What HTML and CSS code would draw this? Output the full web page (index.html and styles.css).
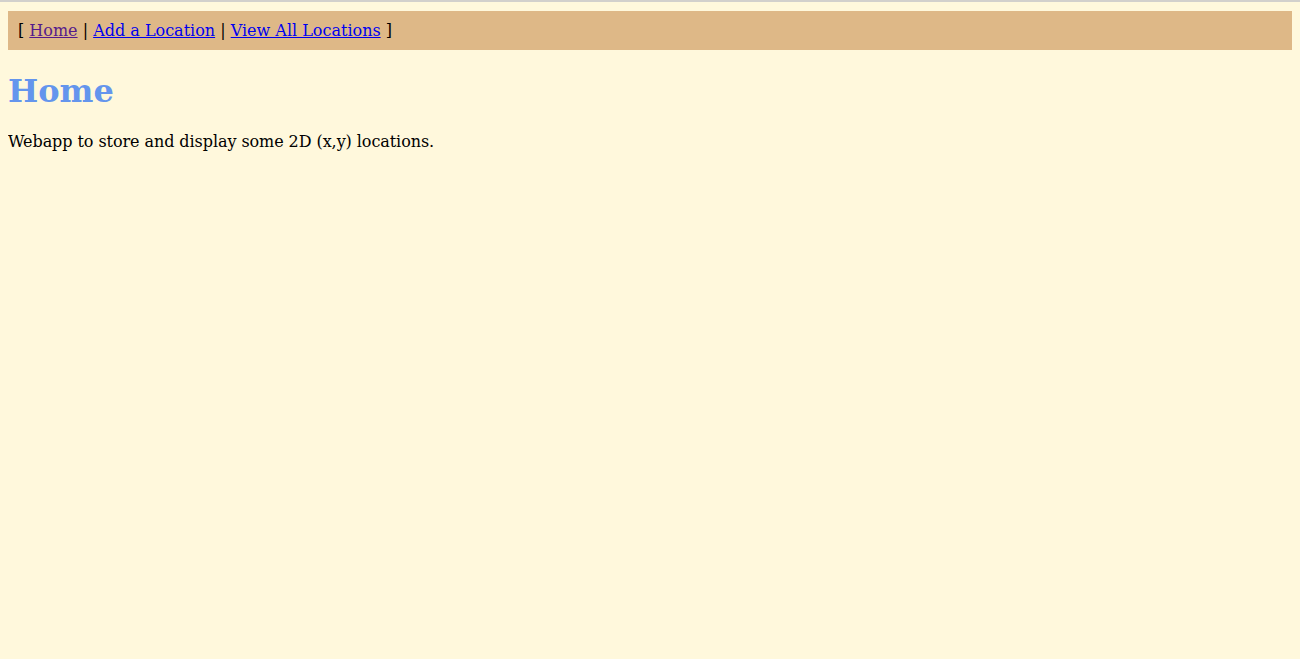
FILE: index.html
```html
<!DOCTYPE html>
<html>
<head>
<meta charset="utf-8">
<title>Home</title>
<link rel="stylesheet" href="styles.css">
</head>
<body>
<div class="nav">[ <a class="visited" href="#">Home</a> | <a href="#">Add a Location</a> | <a href="#">View All Locations</a> ]</div>
<h1 class="title">Home</h1>
<p class="intro">Webapp to store and display some 2D (x,y) locations.</p>
</body>
</html>
```
FILE: styles.css
```css
html {
  background: #fff8dc;
  border-top: 2px solid #d2d0cc;
  padding-top: 1px;
}
body {
  margin: 8px;
  font-family: "DejaVu Serif", serif;
  font-size: 16px;
  color: #000;
}
.nav {
  background: #deb887;
  padding: 10px;
}
.nav a {
  color: #0000ee;
}
.nav a.visited {
  color: #551a8b;
}
.title {
  color: #6495ed;
  font-size: 32px;
  font-weight: bold;
  margin: 22px 0;
}
.intro {
  margin: 16px 0;
  letter-spacing: -0.07px;
}
```
